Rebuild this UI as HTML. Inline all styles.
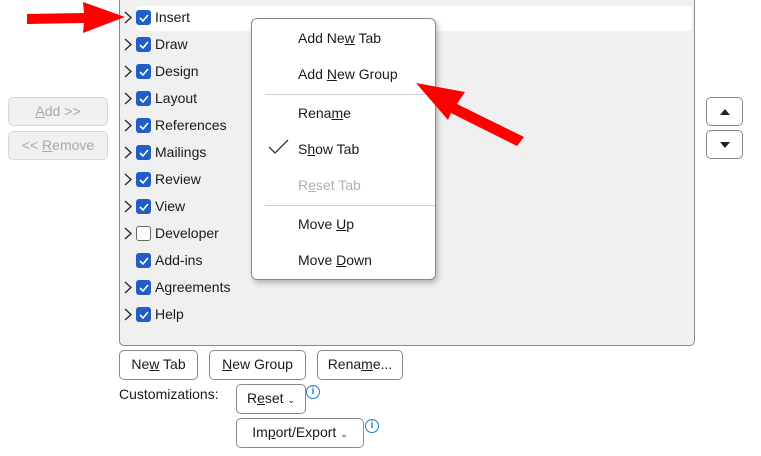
<!DOCTYPE html>
<html><head><style>
*{box-sizing:border-box;margin:0;padding:0}
body{width:761px;height:456px;background:#fff;font-family:"Liberation Sans",sans-serif;font-size:14px;color:#1a1a1a;position:relative;overflow:hidden}
.a{position:absolute}
.panel{left:119px;top:-5px;width:576px;height:351px;background:#f0f0f0;border:1px solid #8a8a8a;border-radius:5px}
.row{position:absolute;left:0;height:22px;line-height:22px;white-space:nowrap}
.cb{position:absolute;left:17px;top:4px;width:15px;height:15px;border-radius:3px;background:#1f5fc5}
.cb.off{background:#fff;border:1px solid #666}
.lbl{position:absolute;left:36px;top:0}
.btn{position:absolute;border:1px solid #8a8a8a;border-radius:5px;background:#fff;text-align:center;line-height:27px}
.dis{background:#f0f0f0;border-color:#d8d8d8;color:#a8a8a8}
.menu{left:251px;top:18px;width:185px;height:262px;background:#fff;border:1px solid #8a8a8a;border-radius:6px;box-shadow:2px 3px 6px rgba(0,0,0,.25)}
.mi{position:absolute;left:46px;line-height:20px}
.sep{position:absolute;left:13px;width:170px;height:1px;background:#d0d0d0}
u{text-decoration:underline}
.info{position:absolute;width:14px;height:14px;border:1.5px solid #1e7ad0;border-radius:50%;color:#1e7ad0;font-size:10px;font-weight:bold;text-align:center;line-height:11px}
</style></head><body>
<div class="a panel">
<div class="a" style="left:16px;top:10px;width:556px;height:25px;background:#fff;border-radius:4px"></div>
</div>
<div class="a" style="left:119px;top:6px">
<div class="row" style="top:0"><span class="cb"></span><span class="lbl">Insert</span></div>
<div class="row" style="top:27px"><span class="cb"></span><span class="lbl">Draw</span></div>
<div class="row" style="top:54px"><span class="cb"></span><span class="lbl">Design</span></div>
<div class="row" style="top:81px"><span class="cb"></span><span class="lbl">Layout</span></div>
<div class="row" style="top:108px"><span class="cb"></span><span class="lbl">References</span></div>
<div class="row" style="top:135px"><span class="cb"></span><span class="lbl">Mailings</span></div>
<div class="row" style="top:162px"><span class="cb"></span><span class="lbl">Review</span></div>
<div class="row" style="top:189px"><span class="cb"></span><span class="lbl">View</span></div>
<div class="row" style="top:216px"><span class="cb off"></span><span class="lbl">Developer</span></div>
<div class="row" style="top:243px"><span class="cb"></span><span class="lbl">Add-ins</span></div>
<div class="row" style="top:270px"><span class="cb"></span><span class="lbl">Agreements</span></div>
<div class="row" style="top:297px"><span class="cb"></span><span class="lbl">Help</span></div>
</div>
<svg class="a" style="left:0;top:0" width="761" height="456">
<defs><path id="ck" d="M-4 0 L-1 3 L4 -3" fill="none" stroke="#fff" stroke-width="1.6"/>
<path id="ch" d="M0 0 L6 5.5 L0 11" fill="none" stroke="#222" stroke-width="1.3"/></defs>
<use href="#ck" x="144" y="18"/><use href="#ck" x="144" y="45"/><use href="#ck" x="144" y="72"/><use href="#ck" x="144" y="99"/><use href="#ck" x="144" y="126"/><use href="#ck" x="144" y="153"/><use href="#ck" x="144" y="180"/><use href="#ck" x="144" y="207"/><use href="#ck" x="144" y="261"/><use href="#ck" x="144" y="288"/><use href="#ck" x="144" y="315"/>
<use href="#ch" x="125" y="12"/><use href="#ch" x="125" y="39"/><use href="#ch" x="125" y="66"/><use href="#ch" x="125" y="93"/><use href="#ch" x="125" y="120"/><use href="#ch" x="125" y="147"/><use href="#ch" x="125" y="174"/><use href="#ch" x="125" y="201"/><use href="#ch" x="125" y="228"/><use href="#ch" x="125" y="282"/><use href="#ch" x="125" y="309"/>
</svg>
<div class="btn dis" style="left:8px;top:97px;width:100px;height:29px"><u>A</u>dd &gt;&gt;</div>
<div class="btn dis" style="left:8px;top:131px;width:100px;height:29px">&lt;&lt; <u>R</u>emove</div>
<div class="btn" style="left:706px;top:97px;width:37px;height:29px"><svg width="12" height="8" style="margin-top:9px"><path d="M1 7 L6 1 L11 7Z" fill="#222"/></svg></div>
<div class="btn" style="left:706px;top:130px;width:37px;height:29px"><svg width="12" height="8" style="margin-top:9px"><path d="M1 1 L6 7 L11 1Z" fill="#222"/></svg></div>
<div class="btn" style="left:119px;top:350px;width:79px;height:30px">Ne<u>w</u> Tab</div>
<div class="btn" style="left:209px;top:350px;width:97px;height:30px"><u>N</u>ew Group</div>
<div class="btn" style="left:317px;top:350px;width:86px;height:30px">Rena<u>m</u>e...</div>
<div class="a" style="left:119px;top:386px">Customizations:</div>
<div class="btn" style="left:236px;top:384px;width:70px;height:30px">R<u>e</u>set <span style="font-size:9px">&#8964;</span></div>
<div class="info" style="left:306px;top:385px">i</div>
<div class="btn" style="left:236px;top:418px;width:128px;height:30px">Im<u>p</u>ort/Export <span style="font-size:9px">&#8964;</span></div>
<div class="info" style="left:365px;top:419px">i</div>
<div class="a menu">
<div class="mi" style="top:9px">Add Ne<u>w</u> Tab</div>
<div class="mi" style="top:45px">Add <u>N</u>ew Group</div>
<div class="sep" style="top:75px"></div>
<div class="mi" style="top:84px">Rena<u>m</u>e</div>
<svg class="a" style="left:16px;top:120px" width="22" height="16"><path d="M1 8 L7 14 L20 1" fill="none" stroke="#333" stroke-width="1.3"/></svg>
<div class="mi" style="top:120px">S<u>h</u>ow Tab</div>
<div class="mi" style="top:156px;color:#b0b0b0">R<u>e</u>set Tab</div>
<div class="sep" style="top:186px"></div>
<div class="mi" style="top:195px">Move <u>U</u>p</div>
<div class="mi" style="top:231px">Move <u>D</u>own</div>
</div>
<svg class="a" style="left:0;top:0" width="761" height="456">
<path d="M27 14 L84 13 L83 2 L125 17 L83 33 L84 23 L27 24Z" fill="#f00"/>
<path d="M416 83 L465 92 L457 104 L524 137 L517 146 L451 113 L448 120Z" fill="#f00"/>
</svg>
</body></html>
